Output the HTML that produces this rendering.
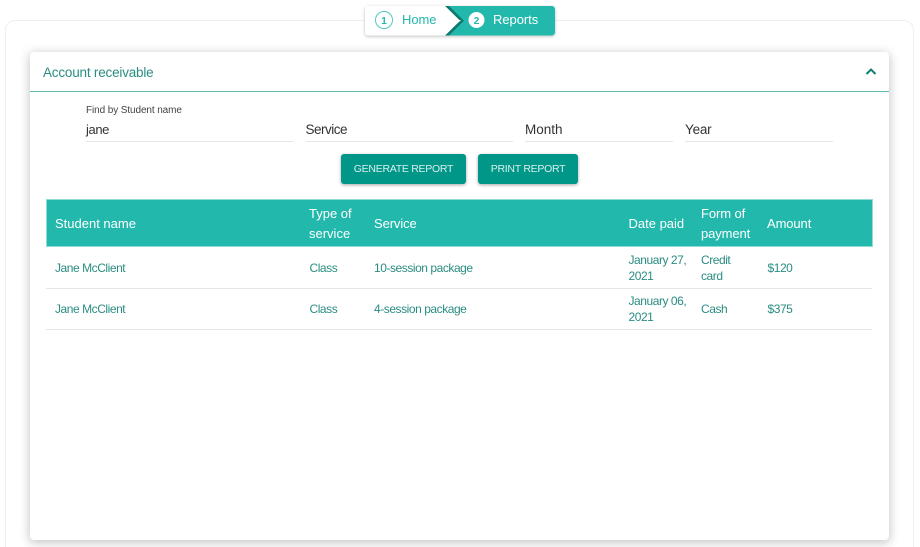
<!DOCTYPE html>
<html><head><meta charset="utf-8">
<style>
html,body{margin:0;padding:0;background:#fff;width:920px;height:547px;overflow:hidden}
body{font-family:"Liberation Sans",sans-serif}
#w{position:relative;width:920px;height:547px;overflow:hidden}
.a{position:absolute;white-space:nowrap}
.t{color:#2a8d82;font-size:12px;letter-spacing:-.45px;line-height:16px}
.h{color:#fff;font-size:13px;line-height:19.5px}
.i{color:#333;font-size:13.5px;line-height:18px}
.u{height:1px;background:#e6e6e6}
.b{background:#009688;color:#d8f0ed;font-size:10.5px;text-align:center;line-height:30px;height:30px;border-radius:3px;box-shadow:0 1px 3px rgba(0,0,0,.35);top:154px;letter-spacing:-.27px}
</style></head><body><div id="w">
<div class="a" style="left:5px;top:20px;width:907px;height:527px;border:1.5px solid #eee;border-bottom:0;border-radius:10px 10px 0 0"></div>
<div class="a" style="left:30px;top:52px;width:859px;height:488px;background:#fff;border-radius:4px;box-shadow:0 2px 10px 1px rgba(0,0,0,.22)"></div>

<svg class="a" style="left:355px;top:0" width="210" height="45" viewBox="355 0 210 45">
<defs><filter id="s" x="-10%" y="-30%" width="120%" height="170%"><feDropShadow dx="0" dy="1" stdDeviation="1.5" flood-color="#000" flood-opacity=".25"/></filter></defs>
<rect x="365" y="6" width="190" height="29.5" rx="3" fill="#fff" filter="url(#s)"/>
<path d="M445 6H552a3 3 0 0 1 3 3V32.500a3 3 0 0 1-3 3H445L460 20.700Z" fill="#22b8ac"/>
<path d="M445 6L460 20.700L445 35.500H449L464 20.700L449 6Z" fill="#0f7a70"/>
<path d="M445 6L459 19.700L461 20.700L459 21.700L445 35.500Z" fill="#fff"/>
<circle cx="384" cy="20" r="8.500" fill="#fff" stroke="#4fc9be" stroke-width="1"/>
<circle cx="476.500" cy="20" r="8" fill="#fff"/>
<text x="384" y="24" text-anchor="middle" font-family="Liberation Sans" font-weight="700" font-size="10" fill="#22b8ac">1</text>
<text x="476.500" y="24" text-anchor="middle" font-family="Liberation Sans" font-weight="700" font-size="10" fill="#22b8ac">2</text>
<text x="402" y="24" font-family="Liberation Sans" font-size="13" letter-spacing="-.05" fill="#22b8ac">Home</text>
<text x="493" y="24" font-family="Liberation Sans" font-size="13" letter-spacing="-.05" fill="#fff">Reports</text>
</svg>

<div class="a" style="left:43px;top:64px;font-size:13.500px;letter-spacing:-.2px;line-height:18px;color:#2a8d82">Account receivable</div>
<svg class="a" style="left:865px;top:67px" width="12" height="9" viewBox="0 0 12 9"><path d="M1.500 7L6 2.500L10.500 7" fill="none" stroke="#0f7f74" stroke-width="2"/></svg>
<div class="a" style="left:30px;top:91px;width:859px;height:1px;background:#62bcb2"></div>

<div class="a" style="left:86px;top:104px;font-size:10px;letter-spacing:-.1px;line-height:13px;color:#444">Find by Student name</div>
<div class="a i" style="left:86px;top:121px;font-size:13px;letter-spacing:-.4px">jane</div>
<div class="a u" style="left:86px;top:141px;width:207px"></div>
<div class="a i" style="left:305.500px;top:121px;letter-spacing:-.5px">Service</div>
<div class="a u" style="left:305.500px;top:141px;width:207px"></div>
<div class="a i" style="left:525px;top:121px">Month</div>
<div class="a u" style="left:525px;top:141px;width:148px"></div>
<div class="a i" style="left:685px;top:121px;letter-spacing:-.2px">Year</div>
<div class="a u" style="left:685px;top:141px;width:148px"></div>

<div class="a b" style="left:341px;width:125px">GENERATE REPORT</div>
<div class="a b" style="left:478px;width:100px">PRINT REPORT</div>

<div class="a" style="left:46px;top:199px;width:825px;height:46px;background:#22b8ac;border:1px solid #8fdcd4"></div>
<div class="a h" style="left:55px;top:214px">Student name</div>
<div class="a h" style="left:309px;top:204px">Type of<br>service</div>
<div class="a h" style="left:374px;top:214px;letter-spacing:-.1px">Service</div>
<div class="a h" style="left:628.500px;top:214px">Date paid</div>
<div class="a h" style="left:701px;top:204px;letter-spacing:-.1px">Form of<br>payment</div>
<div class="a h" style="left:767px;top:214px;letter-spacing:-.1px">Amount</div>

<div class="a t" style="left:55px;top:260px">Jane McClient</div>
<div class="a t" style="left:309.500px;top:260px">Class</div>
<div class="a t" style="left:374px;top:260px">10-session package</div>
<div class="a t" style="left:628.500px;top:252px">January 27,<br>2021</div>
<div class="a t" style="left:701px;top:252px">Credit<br>card</div>
<div class="a t" style="left:767.500px;top:260px">$120</div>
<div class="a u" style="left:46px;top:288px;width:826px"></div>

<div class="a t" style="left:55px;top:301px">Jane McClient</div>
<div class="a t" style="left:309.500px;top:301px">Class</div>
<div class="a t" style="left:374px;top:301px">4-session package</div>
<div class="a t" style="left:628.500px;top:293px">January 06,<br>2021</div>
<div class="a t" style="left:701px;top:301px">Cash</div>
<div class="a t" style="left:767.500px;top:301px">$375</div>
<div class="a u" style="left:46px;top:329px;width:826px"></div>
</div></body></html>
